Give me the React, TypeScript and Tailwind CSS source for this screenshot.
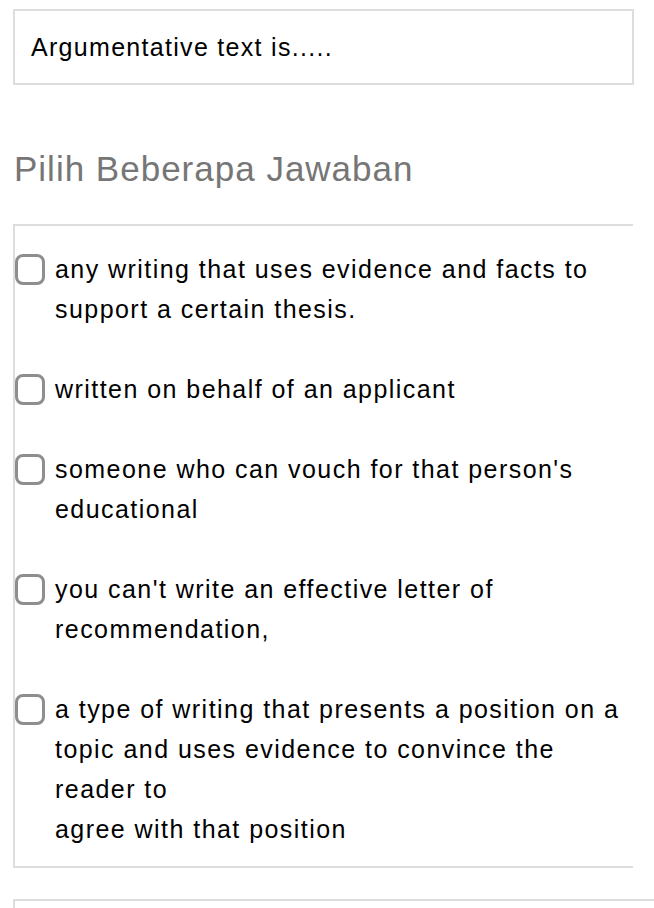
const options: string[][] = [
  ["any writing that uses evidence and facts to", "support a certain thesis."],
  ["written on behalf of an applicant"],
  ["someone who can vouch for that person's", "educational"],
  ["you can't write an effective letter of", "recommendation,"],
  [
    "a type of writing that presents a position on a",
    "topic and uses evidence to convince the",
    "reader to",
    "agree with that position",
  ],
];

const OptionRow = ({ lines }: { lines: string[] }) => (
  <label className="flex items-start">
    <span className="mt-[5px] h-[31px] w-[30px] shrink-0 rounded-[8px] border-[3px] border-[#8e8e8e] bg-white" />
    <span className="ml-[10px] text-[25px] leading-[40px] tracking-[1.45px] text-black">
      {lines.map((l, i) => (
        <span key={i} className="block whitespace-nowrap">
          {l}
        </span>
      ))}
    </span>
  </label>
);

export default function App() {
  return (
    <div
      className="min-h-[908px] overflow-hidden bg-white pt-[9px]"
      style={{ fontFamily: '"Liberation Sans", Arial, sans-serif' }}
    >
      <div className="ml-[13px] w-[621px] border-2 border-[#dddddd] px-[16px] py-[18px]">
        <p className="text-[25px] leading-[36px] tracking-[1.3px] text-black">Argumentative text is.....</p>
      </div>

      <h2 className="ml-[14px] mt-[67px] text-[35px] leading-[34px] tracking-[1px] text-[#767676]">
        Pilih Beberapa Jawaban
      </h2>

      <div className="ml-[13px] mt-[38px] w-[620px] border-y-2 border-l-2 border-[#dddddd] pt-[23px] pb-[17px]">
        <div className="flex flex-col gap-[40px]">
          {options.map((o, i) => (
            <OptionRow key={i} lines={o} />
          ))}
        </div>
      </div>

      <div className="ml-[13px] mt-[31px] h-[40px] border-t-2 border-l-2 border-[#dddddd]" />
    </div>
  );
}
